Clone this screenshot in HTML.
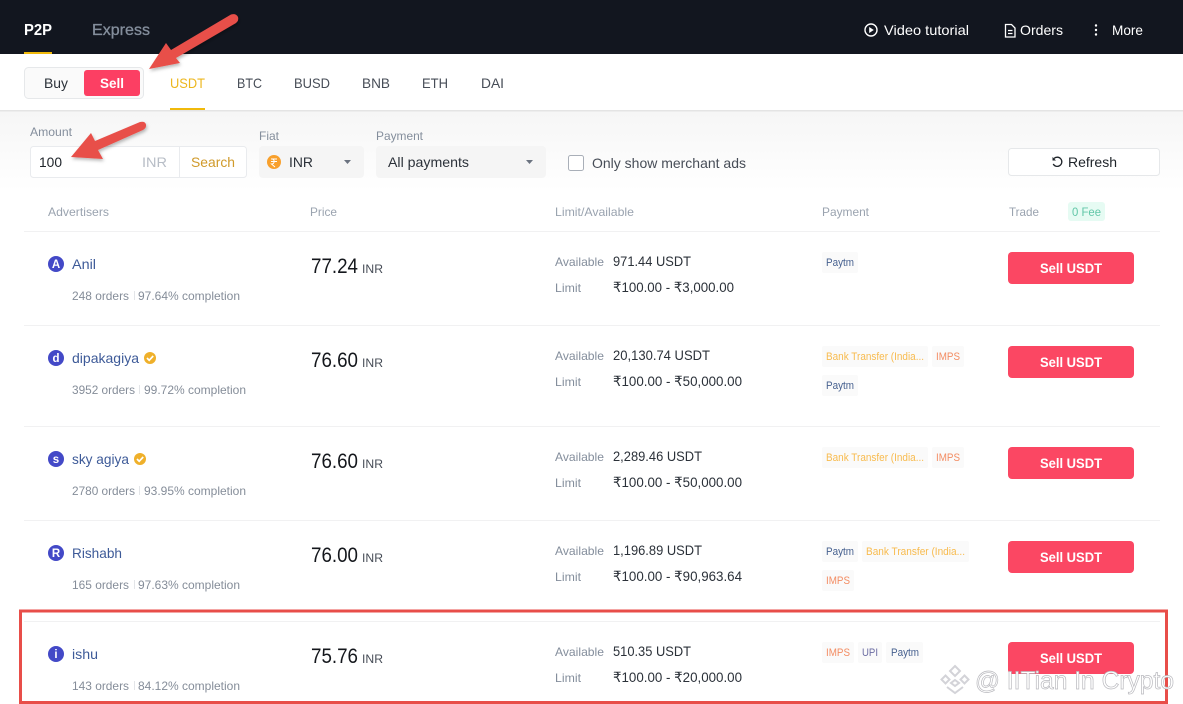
<!DOCTYPE html>
<html lang="en">
<head>
<meta charset="utf-8">
<title>P2P</title>
<style>
html,body{margin:0;padding:0;background:#fff;width:1183px;height:704px;overflow:hidden}
svg{display:block}
text{font-family:"Liberation Sans",sans-serif;font-size:14px;fill:#1e2329}
.lab{font-size:12px;fill:#848e9c}
.hd{font-size:12px;fill:#9aa3af}
.nm{font-size:14px;fill:#3d5a98}
.st{font-size:12px;fill:#858d99}
.pr{font-size:21px;fill:#14171c}
.cur{font-size:12px;fill:#474d57}
.av{font-size:12px;fill:#848e9c}
.val{font-size:14px;fill:#2b3139}
.ch{font-size:11px}
.pt{fill:#46608f}
.bk{fill:#f8bb4e}
.im{fill:#f38c62}
.up{fill:#6a6ba2}
.btn{font-size:14px;font-weight:bold;fill:#fff}
.ini{font-size:11.5px;font-weight:bold;fill:#fff;text-anchor:middle}
.wm{font-size:25px;fill:#fff;stroke:#b9b9be;stroke-width:.7}
</style>
</head>
<body>
<svg width="1183" height="704" viewBox="0 0 1183 704" xmlns="http://www.w3.org/2000/svg">
<defs>
<linearGradient id="fb" x1="0" y1="0" x2="0" y2="1"><stop offset="0" stop-color="#f6f6f6"/><stop offset="1" stop-color="#fff"/></linearGradient>
<filter id="sh" x="-20%" y="-20%" width="140%" height="140%"><feDropShadow dx="1" dy="2" stdDeviation="1.5" flood-color="#000" flood-opacity=".28"/></filter>
<g id="bdg"><circle r="6" fill="#efb02a"/><path d="M-3 0l2.2 2.3L3.2-2" fill="none" stroke="#fff" stroke-width="1.7"/></g>
</defs>

<rect width="1183" height="704" fill="#fff"/>
<!-- top nav -->
<rect width="1183" height="54" fill="#12161f"/>
<text x="24" y="35" textLength="28" lengthAdjust="spacingAndGlyphs" style="font-size:16px;font-weight:bold;fill:#fff">P2P</text>
<rect x="24" y="52" width="28" height="2" fill="#f0b90b"/>
<text x="92" y="35" textLength="58" lengthAdjust="spacingAndGlyphs" style="font-size:16px;fill:#848e9c;stroke:#848e9c;stroke-width:.3">Express</text>
<circle cx="871" cy="30" r="6" fill="none" stroke="#fff" stroke-width="1.4"/>
<path d="M869.2 27v6l4.6-3z" fill="#fff"/>
<text x="884" y="35" textLength="85" lengthAdjust="spacingAndGlyphs" style="fill:#fff">Video tutorial</text>
<path d="M1005.5 24.500h6l3.500 3.500v9h-9.500z" fill="none" stroke="#fff" stroke-width="1.300"/>
<path d="M1008 30.500h4.500M1008 33.500h4.500" stroke="#fff" stroke-width="1.200"/>
<text x="1020" y="35" textLength="43" lengthAdjust="spacingAndGlyphs" style="fill:#fff">Orders</text>
<circle cx="1096" cy="25.500" r="1.200" fill="#fff"/><circle cx="1096" cy="30" r="1.200" fill="#fff"/><circle cx="1096" cy="34.500" r="1.200" fill="#fff"/>
<text x="1112" y="35" textLength="31" lengthAdjust="spacingAndGlyphs" style="fill:#fff">More</text>

<!-- tabs bar -->
<rect x="0" y="110" width="1183" height="1.500" fill="#e4e4e4"/>
<rect x="0" y="111.500" width="1183" height="80" fill="url(#fb)"/>
<rect x="24.500" y="67.500" width="119" height="31" rx="4" fill="#fafafa" stroke="#e6e8ea"/>
<text x="44" y="88" textLength="24" lengthAdjust="spacingAndGlyphs" style="fill:#2b3139">Buy</text>
<rect x="84" y="70" width="56" height="26" rx="3" fill="#fc3f63"/>
<text x="100" y="88" textLength="24" lengthAdjust="spacingAndGlyphs" style="font-weight:bold;fill:#fff">Sell</text>
<text x="170" y="88" textLength="35" lengthAdjust="spacingAndGlyphs" style="fill:#edb71f">USDT</text>
<rect x="170" y="108" width="35" height="2" fill="#f0b90b"/>
<text x="237" y="88" textLength="25" lengthAdjust="spacingAndGlyphs" style="fill:#474d57">BTC</text>
<text x="294" y="88" textLength="36" lengthAdjust="spacingAndGlyphs" style="fill:#474d57">BUSD</text>
<text x="362" y="88" textLength="28" lengthAdjust="spacingAndGlyphs" style="fill:#474d57">BNB</text>
<text x="422" y="88" textLength="26" lengthAdjust="spacingAndGlyphs" style="fill:#474d57">ETH</text>
<text x="481" y="88" textLength="23" lengthAdjust="spacingAndGlyphs" style="fill:#474d57">DAI</text>

<!-- filters -->
<text class="lab" x="30" y="136" textLength="42" lengthAdjust="spacingAndGlyphs">Amount</text>
<rect x="30.500" y="146.500" width="216" height="31" rx="3" fill="#fff" stroke="#e9ebee"/>
<path d="M179.500 147v30" stroke="#e9ebee"/>
<text x="39" y="167" textLength="23" lengthAdjust="spacingAndGlyphs">100</text>
<text x="142" y="167" textLength="25" lengthAdjust="spacingAndGlyphs" style="fill:#b7bdc6">INR</text>
<text x="191" y="167" textLength="44" lengthAdjust="spacingAndGlyphs" style="fill:#d09a2a">Search</text>

<text class="lab" x="259" y="140" textLength="20" lengthAdjust="spacingAndGlyphs">Fiat</text>
<rect x="259" y="146" width="105" height="32" rx="4" fill="#f5f5f5"/>
<circle cx="274" cy="162" r="7" fill="#f8a02c"/>
<path d="M271 159h6M271 161.500h6M272 159c3 0 3 5-.5 5l3.500 3" fill="none" stroke="#fff" stroke-width="1"/>
<text x="289" y="167" textLength="24" lengthAdjust="spacingAndGlyphs" style="fill:#2b3139">INR</text>
<path d="M344 160h7l-3.500 4z" fill="#6b7380"/>

<text class="lab" x="376" y="140" textLength="47" lengthAdjust="spacingAndGlyphs">Payment</text>
<rect x="376" y="146" width="170" height="32" rx="4" fill="#f5f5f5"/>
<text x="388" y="167" textLength="81" lengthAdjust="spacingAndGlyphs" style="fill:#2b3139">All payments</text>
<path d="M526 160h7l-3.500 4z" fill="#6b7380"/>

<rect x="568.500" y="155.500" width="15" height="15" rx="2" fill="#fff" stroke="#a9afb8"/>
<text x="592" y="168" textLength="154" lengthAdjust="spacingAndGlyphs" style="fill:#474d57">Only show merchant ads</text>

<rect x="1008.500" y="148.500" width="151" height="27" rx="3" fill="#fff" stroke="#e6e8ea"/>
<path d="M1054 158.500a4.600 4.600 0 1 1-.8 5.500" fill="none" stroke="#1e2329" stroke-width="1.300"/>
<path d="M1052.500 157v3.500h3.500z" fill="#1e2329"/>
<text x="1068" y="167" textLength="49" lengthAdjust="spacingAndGlyphs" style="fill:#1e2329">Refresh</text>

<!-- header -->
<text class="hd" x="48" y="216" textLength="61" lengthAdjust="spacingAndGlyphs">Advertisers</text>
<text class="hd" x="310" y="216" textLength="27" lengthAdjust="spacingAndGlyphs">Price</text>
<text class="hd" x="555" y="216" textLength="79" lengthAdjust="spacingAndGlyphs">Limit/Available</text>
<text class="hd" x="822" y="216" textLength="47" lengthAdjust="spacingAndGlyphs">Payment</text>
<text class="hd" x="1009" y="216" textLength="30" lengthAdjust="spacingAndGlyphs">Trade</text>
<rect x="1068" y="202" width="37" height="19" rx="3" fill="#e6fbf3"/>
<text x="1072" y="216" textLength="29" lengthAdjust="spacingAndGlyphs" style="font-size:12px;fill:#62c7a8">0 Fee</text>

<!-- separators -->
<g fill="#f1f1f2">
<rect x="24" y="231" width="1136" height="1"/>
<rect x="24" y="325" width="1136" height="1"/>
<rect x="24" y="426" width="1136" height="1"/>
<rect x="24" y="520" width="1136" height="1"/>
<rect x="24" y="621" width="1136" height="1"/>
</g>

<!-- row 0 -->
<g>
<circle cx="56" cy="264" r="8" fill="#4349c7"/><text class="ini" x="56" y="268">A</text>
<text class="nm" x="72" y="269" textLength="24" lengthAdjust="spacingAndGlyphs">Anil</text>
<text class="st" x="72" y="300" textLength="57" lengthAdjust="spacingAndGlyphs">248 orders</text>
<rect x="134" y="291" width="1" height="9" fill="#e3e5e8"/>
<text class="st" x="138" y="300" textLength="102" lengthAdjust="spacingAndGlyphs">97.64% completion</text>
<text class="pr" x="311" y="273" textLength="47" lengthAdjust="spacingAndGlyphs">77.24</text>
<text class="cur" x="362" y="273" textLength="21" lengthAdjust="spacingAndGlyphs">INR</text>
<text class="av" x="555" y="266" textLength="49" lengthAdjust="spacingAndGlyphs">Available</text>
<text class="val" x="613" y="266" textLength="78" lengthAdjust="spacingAndGlyphs">971.44 USDT</text>
<text class="av" x="555" y="292" textLength="26" lengthAdjust="spacingAndGlyphs">Limit</text>
<text class="val" x="613" y="292" textLength="121" lengthAdjust="spacingAndGlyphs">₹100.00 - ₹3,000.00</text>
<rect x="822" y="252" width="36" height="21" rx="2" fill="#fafafa"/>
<text class="ch pt" x="826" y="266" textLength="28" lengthAdjust="spacingAndGlyphs">Paytm</text>
<rect x="1008" y="252" width="126" height="32" rx="4" fill="#fb4763"/>
<text class="btn" x="1040" y="273" textLength="62" lengthAdjust="spacingAndGlyphs">Sell USDT</text>
</g>

<!-- row 1 -->
<g transform="translate(0,94)">
<circle cx="56" cy="264" r="8" fill="#4349c7"/><text class="ini" x="56" y="268">d</text>
<text class="nm" x="72" y="269" textLength="67" lengthAdjust="spacingAndGlyphs">dipakagiya</text>
<use href="#bdg" x="150" y="264"/>
<text class="st" x="72" y="300" textLength="63" lengthAdjust="spacingAndGlyphs">3952 orders</text>
<rect x="139" y="291" width="1" height="9" fill="#e3e5e8"/>
<text class="st" x="144" y="300" textLength="102" lengthAdjust="spacingAndGlyphs">99.72% completion</text>
<text class="pr" x="311" y="273" textLength="47" lengthAdjust="spacingAndGlyphs">76.60</text>
<text class="cur" x="362" y="273" textLength="21" lengthAdjust="spacingAndGlyphs">INR</text>
<text class="av" x="555" y="266" textLength="49" lengthAdjust="spacingAndGlyphs">Available</text>
<text class="val" x="613" y="266" textLength="97" lengthAdjust="spacingAndGlyphs">20,130.74 USDT</text>
<text class="av" x="555" y="292" textLength="26" lengthAdjust="spacingAndGlyphs">Limit</text>
<text class="val" x="613" y="292" textLength="129" lengthAdjust="spacingAndGlyphs">₹100.00 - ₹50,000.00</text>
<rect x="822" y="252" width="106" height="21" rx="2" fill="#fafafa"/>
<text class="ch bk" x="826" y="266" textLength="98" lengthAdjust="spacingAndGlyphs">Bank Transfer (India...</text>
<rect x="932" y="252" width="32" height="21" rx="2" fill="#fafafa"/>
<text class="ch im" x="936" y="266" textLength="24" lengthAdjust="spacingAndGlyphs">IMPS</text>
<rect x="822" y="281" width="36" height="21" rx="2" fill="#fafafa"/>
<text class="ch pt" x="826" y="295" textLength="28" lengthAdjust="spacingAndGlyphs">Paytm</text>
<rect x="1008" y="252" width="126" height="32" rx="4" fill="#fb4763"/>
<text class="btn" x="1040" y="273" textLength="62" lengthAdjust="spacingAndGlyphs">Sell USDT</text>
</g>

<!-- row 2 -->
<g transform="translate(0,195)">
<circle cx="56" cy="264" r="8" fill="#4349c7"/><text class="ini" x="56" y="268">s</text>
<text class="nm" x="72" y="269" textLength="57" lengthAdjust="spacingAndGlyphs">sky agiya</text>
<use href="#bdg" x="140" y="264"/>
<text class="st" x="72" y="300" textLength="63" lengthAdjust="spacingAndGlyphs">2780 orders</text>
<rect x="139" y="291" width="1" height="9" fill="#e3e5e8"/>
<text class="st" x="144" y="300" textLength="102" lengthAdjust="spacingAndGlyphs">93.95% completion</text>
<text class="pr" x="311" y="273" textLength="47" lengthAdjust="spacingAndGlyphs">76.60</text>
<text class="cur" x="362" y="273" textLength="21" lengthAdjust="spacingAndGlyphs">INR</text>
<text class="av" x="555" y="266" textLength="49" lengthAdjust="spacingAndGlyphs">Available</text>
<text class="val" x="613" y="266" textLength="89" lengthAdjust="spacingAndGlyphs">2,289.46 USDT</text>
<text class="av" x="555" y="292" textLength="26" lengthAdjust="spacingAndGlyphs">Limit</text>
<text class="val" x="613" y="292" textLength="129" lengthAdjust="spacingAndGlyphs">₹100.00 - ₹50,000.00</text>
<rect x="822" y="252" width="106" height="21" rx="2" fill="#fafafa"/>
<text class="ch bk" x="826" y="266" textLength="98" lengthAdjust="spacingAndGlyphs">Bank Transfer (India...</text>
<rect x="932" y="252" width="32" height="21" rx="2" fill="#fafafa"/>
<text class="ch im" x="936" y="266" textLength="24" lengthAdjust="spacingAndGlyphs">IMPS</text>
<rect x="1008" y="252" width="126" height="32" rx="4" fill="#fb4763"/>
<text class="btn" x="1040" y="273" textLength="62" lengthAdjust="spacingAndGlyphs">Sell USDT</text>
</g>

<!-- row 3 -->
<g transform="translate(0,289)">
<circle cx="56" cy="264" r="8" fill="#4349c7"/><text class="ini" x="56" y="268">R</text>
<text class="nm" x="72" y="269" textLength="50" lengthAdjust="spacingAndGlyphs">Rishabh</text>
<text class="st" x="72" y="300" textLength="57" lengthAdjust="spacingAndGlyphs">165 orders</text>
<rect x="134" y="291" width="1" height="9" fill="#e3e5e8"/>
<text class="st" x="138" y="300" textLength="102" lengthAdjust="spacingAndGlyphs">97.63% completion</text>
<text class="pr" x="311" y="273" textLength="47" lengthAdjust="spacingAndGlyphs">76.00</text>
<text class="cur" x="362" y="273" textLength="21" lengthAdjust="spacingAndGlyphs">INR</text>
<text class="av" x="555" y="266" textLength="49" lengthAdjust="spacingAndGlyphs">Available</text>
<text class="val" x="613" y="266" textLength="89" lengthAdjust="spacingAndGlyphs">1,196.89 USDT</text>
<text class="av" x="555" y="292" textLength="26" lengthAdjust="spacingAndGlyphs">Limit</text>
<text class="val" x="613" y="292" textLength="129" lengthAdjust="spacingAndGlyphs">₹100.00 - ₹90,963.64</text>
<rect x="822" y="252" width="36" height="21" rx="2" fill="#fafafa"/>
<text class="ch pt" x="826" y="266" textLength="28" lengthAdjust="spacingAndGlyphs">Paytm</text>
<rect x="862" y="252" width="107" height="21" rx="2" fill="#fafafa"/>
<text class="ch bk" x="866" y="266" textLength="99" lengthAdjust="spacingAndGlyphs">Bank Transfer (India...</text>
<rect x="822" y="281" width="32" height="21" rx="2" fill="#fafafa"/>
<text class="ch im" x="826" y="295" textLength="24" lengthAdjust="spacingAndGlyphs">IMPS</text>
<rect x="1008" y="252" width="126" height="32" rx="4" fill="#fb4763"/>
<text class="btn" x="1040" y="273" textLength="62" lengthAdjust="spacingAndGlyphs">Sell USDT</text>
</g>

<!-- row 4 -->
<g transform="translate(0,390)">
<circle cx="56" cy="264" r="8" fill="#4349c7"/><text class="ini" x="56" y="268">i</text>
<text class="nm" x="72" y="269" textLength="26" lengthAdjust="spacingAndGlyphs">ishu</text>
<text class="st" x="72" y="300" textLength="57" lengthAdjust="spacingAndGlyphs">143 orders</text>
<rect x="134" y="291" width="1" height="9" fill="#e3e5e8"/>
<text class="st" x="138" y="300" textLength="102" lengthAdjust="spacingAndGlyphs">84.12% completion</text>
<text class="pr" x="311" y="273" textLength="47" lengthAdjust="spacingAndGlyphs">75.76</text>
<text class="cur" x="362" y="273" textLength="21" lengthAdjust="spacingAndGlyphs">INR</text>
<text class="av" x="555" y="266" textLength="49" lengthAdjust="spacingAndGlyphs">Available</text>
<text class="val" x="613" y="266" textLength="78" lengthAdjust="spacingAndGlyphs">510.35 USDT</text>
<text class="av" x="555" y="292" textLength="26" lengthAdjust="spacingAndGlyphs">Limit</text>
<text class="val" x="613" y="292" textLength="129" lengthAdjust="spacingAndGlyphs">₹100.00 - ₹20,000.00</text>
<rect x="822" y="252" width="32" height="21" rx="2" fill="#fafafa"/>
<text class="ch im" x="826" y="266" textLength="24" lengthAdjust="spacingAndGlyphs">IMPS</text>
<rect x="858" y="252" width="24" height="21" rx="2" fill="#fafafa"/>
<text class="ch up" x="862" y="266" textLength="16" lengthAdjust="spacingAndGlyphs">UPI</text>
<rect x="886" y="252" width="37" height="21" rx="2" fill="#fafafa"/>
<text class="ch pt" x="891" y="266" textLength="28" lengthAdjust="spacingAndGlyphs">Paytm</text>
<rect x="1008" y="252" width="126" height="32" rx="4" fill="#fb4763"/>
<text class="btn" x="1040" y="273" textLength="62" lengthAdjust="spacingAndGlyphs">Sell USDT</text>
</g>

<!-- annotations -->
<rect x="20.500" y="611" width="1146" height="91.500" fill="none" stroke="#e84e49" stroke-width="3"/>
<g fill="#e8504a" filter="url(#sh)">
<path d="M149 69L166 43L171 50L231 14.500Q236 13 238 17Q239 20.500 236 23L176 58L180 63Z"/>
<path d="M71 157L91 133L95 141L140 122Q145 121 146 124.500Q146.500 128 143 130L98 150L103 159Z"/>
</g>

<!-- watermark -->
<g fill="#fff" stroke="#d3d3d8" stroke-width="2">
<path d="M955 666l5 5-5 5-5-5z"/>
<path d="M945.500 675.500l4 4-4 4-4-4z"/>
<path d="M964.500 675.500l4 4-4 4-4-4z"/>
<path d="M955 680l4 3-4 3-4-3z"/>
<path d="M947 687l8 6 8-6" fill="none"/>
</g>
<text class="wm" x="975" y="689" textLength="199" lengthAdjust="spacingAndGlyphs">@ IITian In Crypto</text>
</svg>
</body>
</html>
